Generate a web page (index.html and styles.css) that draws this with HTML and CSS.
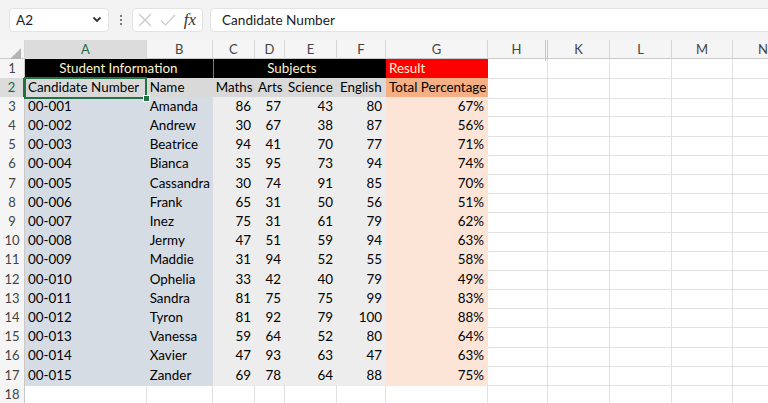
FILE: index.html
```
<!DOCTYPE html>
<html lang="en">
  <head>
    <meta charset="UTF-8" />
    <title>Student Results</title>
    <link rel="stylesheet" href="styles.css">
  </head>
  <body>
    <div class="formula-bar">
      <div class="name-box">
        <span>A2</span>
        <svg class="chevron" width="10" height="7" viewBox="0 0 10 7"><path d="M1.5 1.5 L5 5 L8.5 1.5" fill="none" stroke="#333" stroke-width="1.8"/></svg>
      </div>
      <div class="dots"><i></i><i></i><i></i></div>
      <div class="fx-box">
        <svg width="14" height="14" viewBox="0 0 14 14"><path d="M1 1 L13 13 M13 1 L1 13" stroke="#c8c8c8" stroke-width="1.2"/></svg>
        <svg width="16" height="14" viewBox="0 0 16 14"><path d="M1 7.5 L5.5 12 L15 2" fill="none" stroke="#c8c8c8" stroke-width="1.2"/></svg>
        <span class="fx">fx</span>
      </div>
      <div class="formula-input">Candidate Number</div>
    </div>

    <div class="sheet">
      <div class="row col-heads">
        <div class="corner"><svg width="11" height="11" viewBox="0 0 11 11"><path d="M11 0 L11 11 L0 11 Z" fill="#b4b4b4"/></svg></div>
        <div class="ch active">A</div><div class="ch">B</div><div class="ch">C</div><div class="ch">D</div>
        <div class="ch">E</div><div class="ch">F</div><div class="ch">G</div><div class="ch hidden-after">H</div>
        <div class="ch">K</div><div class="ch">L</div><div class="ch">M</div><div class="ch">N</div>
      </div>

      <div class="row">
        <div class="rh">1</div>
        <div class="c title span-ab">Student Information</div>
        <div class="c title span-cf subjects">Subjects</div>
        <div class="c result">Result</div>
        <div class="c"></div><div class="c"></div><div class="c"></div><div class="c"></div><div class="c"></div>
      </div>

      <div class="row">
        <div class="rh active">2</div>
        <div class="c head selected">Candidate Number</div>
        <div class="c head">Name</div>
        <div class="c head">Maths</div>
        <div class="c head">Arts</div>
        <div class="c head">Science</div>
        <div class="c head">English</div>
        <div class="c head total">Total Percentage</div>
        <div class="c"></div><div class="c"></div><div class="c"></div><div class="c"></div><div class="c"></div>
      </div>

      <div class="row"><div class="rh">3</div><div class="c info">00-001</div><div class="c info">Amanda</div><div class="c num">86</div><div class="c num">57</div><div class="c num">43</div><div class="c num">80</div><div class="c pct">67%</div><div class="c"></div><div class="c"></div><div class="c"></div><div class="c"></div><div class="c"></div></div>
      <div class="row"><div class="rh">4</div><div class="c info">00-002</div><div class="c info">Andrew</div><div class="c num">30</div><div class="c num">67</div><div class="c num">38</div><div class="c num">87</div><div class="c pct">56%</div><div class="c"></div><div class="c"></div><div class="c"></div><div class="c"></div><div class="c"></div></div>
      <div class="row"><div class="rh">5</div><div class="c info">00-003</div><div class="c info">Beatrice</div><div class="c num">94</div><div class="c num">41</div><div class="c num">70</div><div class="c num">77</div><div class="c pct">71%</div><div class="c"></div><div class="c"></div><div class="c"></div><div class="c"></div><div class="c"></div></div>
      <div class="row"><div class="rh">6</div><div class="c info">00-004</div><div class="c info">Bianca</div><div class="c num">35</div><div class="c num">95</div><div class="c num">73</div><div class="c num">94</div><div class="c pct">74%</div><div class="c"></div><div class="c"></div><div class="c"></div><div class="c"></div><div class="c"></div></div>
      <div class="row"><div class="rh">7</div><div class="c info">00-005</div><div class="c info">Cassandra</div><div class="c num">30</div><div class="c num">74</div><div class="c num">91</div><div class="c num">85</div><div class="c pct">70%</div><div class="c"></div><div class="c"></div><div class="c"></div><div class="c"></div><div class="c"></div></div>
      <div class="row"><div class="rh">8</div><div class="c info">00-006</div><div class="c info">Frank</div><div class="c num">65</div><div class="c num">31</div><div class="c num">50</div><div class="c num">56</div><div class="c pct">51%</div><div class="c"></div><div class="c"></div><div class="c"></div><div class="c"></div><div class="c"></div></div>
      <div class="row"><div class="rh">9</div><div class="c info">00-007</div><div class="c info">Inez</div><div class="c num">75</div><div class="c num">31</div><div class="c num">61</div><div class="c num">79</div><div class="c pct">62%</div><div class="c"></div><div class="c"></div><div class="c"></div><div class="c"></div><div class="c"></div></div>
      <div class="row"><div class="rh">10</div><div class="c info">00-008</div><div class="c info">Jermy</div><div class="c num">47</div><div class="c num">51</div><div class="c num">59</div><div class="c num">94</div><div class="c pct">63%</div><div class="c"></div><div class="c"></div><div class="c"></div><div class="c"></div><div class="c"></div></div>
      <div class="row"><div class="rh">11</div><div class="c info">00-009</div><div class="c info">Maddie</div><div class="c num">31</div><div class="c num">94</div><div class="c num">52</div><div class="c num">55</div><div class="c pct">58%</div><div class="c"></div><div class="c"></div><div class="c"></div><div class="c"></div><div class="c"></div></div>
      <div class="row"><div class="rh">12</div><div class="c info">00-010</div><div class="c info">Ophelia</div><div class="c num">33</div><div class="c num">42</div><div class="c num">40</div><div class="c num">79</div><div class="c pct">49%</div><div class="c"></div><div class="c"></div><div class="c"></div><div class="c"></div><div class="c"></div></div>
      <div class="row"><div class="rh">13</div><div class="c info">00-011</div><div class="c info">Sandra</div><div class="c num">81</div><div class="c num">75</div><div class="c num">75</div><div class="c num">99</div><div class="c pct">83%</div><div class="c"></div><div class="c"></div><div class="c"></div><div class="c"></div><div class="c"></div></div>
      <div class="row"><div class="rh">14</div><div class="c info">00-012</div><div class="c info">Tyron</div><div class="c num">81</div><div class="c num">92</div><div class="c num">79</div><div class="c num">100</div><div class="c pct">88%</div><div class="c"></div><div class="c"></div><div class="c"></div><div class="c"></div><div class="c"></div></div>
      <div class="row"><div class="rh">15</div><div class="c info">00-013</div><div class="c info">Vanessa</div><div class="c num">59</div><div class="c num">64</div><div class="c num">52</div><div class="c num">80</div><div class="c pct">64%</div><div class="c"></div><div class="c"></div><div class="c"></div><div class="c"></div><div class="c"></div></div>
      <div class="row"><div class="rh">16</div><div class="c info">00-014</div><div class="c info">Xavier</div><div class="c num">47</div><div class="c num">93</div><div class="c num">63</div><div class="c num">47</div><div class="c pct">63%</div><div class="c"></div><div class="c"></div><div class="c"></div><div class="c"></div><div class="c"></div></div>
      <div class="row"><div class="rh">17</div><div class="c info">00-015</div><div class="c info">Zander</div><div class="c num">69</div><div class="c num">78</div><div class="c num">64</div><div class="c num">88</div><div class="c pct">75%</div><div class="c"></div><div class="c"></div><div class="c"></div><div class="c"></div><div class="c"></div></div>
      <div class="row"><div class="rh">18</div><div class="c"></div><div class="c"></div><div class="c"></div><div class="c"></div><div class="c"></div><div class="c"></div><div class="c"></div><div class="c"></div><div class="c"></div><div class="c"></div><div class="c"></div><div class="c"></div></div>
    </div>
  </body>
</html>
```

FILE: styles.css
```
body {
  margin: 0;
  width: 768px;
  height: 403px;
  overflow: hidden;
  background: #fff;
  font-family: Lato, "Liberation Sans", sans-serif;
  color: #000;
}
.formula-bar {
  height: 39.5px;
  background: #f3f3f3;
  display: flex;
  align-items: center;
  padding-left: 9px;
  box-sizing: border-box;
}
.name-box,
.fx-box,
.formula-input {
  height: 24px;
  background: #fff;
  border: 1px solid #e3e3e3;
  border-radius: 4px;
  box-sizing: border-box;
  display: flex;
  align-items: center;
}
.name-box {
  width: 100px;
  padding: 0 6px;
  justify-content: space-between;
  font-size: 13.5px;
  color: #222;
}
.dots {
  width: 23px;
  display: flex;
  flex-direction: column;
  align-items: center;
  gap: 2px;
}
.dots i {
  width: 2px;
  height: 2px;
  border-radius: 1px;
  background: #555;
}
.fx-box {
  width: 71px;
  padding: 0 6px 0 5px;
  justify-content: space-between;
}
.fx {
  font-family: "Liberation Serif", serif;
  font-style: italic;
  font-size: 17px;
  color: #333;
}
.formula-input {
  margin-left: 7px;
  flex: 1;
  margin-right: -10px;
  padding-left: 11px;
  font-size: 13.6px;
  color: #222;
}

.row {
  display: grid;
  grid-template-columns: 25px 121.7px 66px 42.3px 30px 52px 49px 102px 60px 62px 62px 61px 61px;
  height: 19.2px;
}
.col-heads {
  height: 19px;
  background: #f5f5f5;
  border-bottom: 1px solid #c9c9c9;
  box-sizing: border-box;
}
.corner {
  display: flex;
  align-items: flex-end;
  justify-content: flex-end;
  padding: 0 3px 2px 0;
  border-right: 1px solid #d6d6d6;
}
.ch {
  border-right: 1px solid #d6d6d6;
  text-align: center;
  font-size: 13px;
  line-height: 19px;
  color: #444;
}
.ch.active {
  background: #dcdcdc;
  color: #1d6b3c;
  border-bottom: 2px solid #217346;
}
.ch.hidden-after {
  border-right: 3px double #c9c9c9;
}
.rh {
  background: #f5f5f5;
  border-right: 1px solid #c9c9c9;
  border-bottom: 1px solid #dedede;
  box-sizing: border-box;
  text-align: center;
  font-size: 13px;
  line-height: 19px;
  color: #444;
}
.rh.active {
  background: #dcdcdc;
  color: #1d6b3c;
  border-right: 2px solid #217346;
}
.c {
  box-sizing: border-box;
  border-right: 1px solid #e1e1e1;
  border-bottom: 1px solid #e1e1e1;
  padding: 0 3px;
  font-size: 13.4px;
  line-height: 19.5px;
  white-space: nowrap;
  overflow: visible;
}
.title {
  background: #000;
  color: #fff2cc;
  border-color: transparent;
  text-align: center;
}
.span-ab {
  grid-column: span 2;
}
.span-cf {
  grid-column: span 4;
  padding-right: 18px;
  border-left: 1px solid #7a7a7a;
}
.result {
  background: #ff0000;
  color: #fff2cc;
  border-color: transparent;
}
.head {
  background: #d9d9d9;
  border-color: transparent;
  border-bottom: 2px solid #000;
  line-height: 19px;
}
.head.total {
  background: #f4b084;
}
.selected {
  position: relative;
}
.selected::after {
  content: "";
  position: absolute;
  left: -1px;
  top: -1px;
  right: -1px;
  bottom: -2px;
  border: 2px solid #217346;
}
.selected::before {
  content: "";
  position: absolute;
  right: -4px;
  bottom: -5px;
  width: 5px;
  height: 5px;
  background: #217346;
  border: 1px solid #fff;
  z-index: 2;
}
.info {
  background: #d6dce4;
  border-color: transparent;
}
.num {
  background: #ededed;
  border-color: transparent;
  text-align: right;
}
.pct {
  background: #fce4d6;
  border-color: transparent;
  text-align: right;
}
```
